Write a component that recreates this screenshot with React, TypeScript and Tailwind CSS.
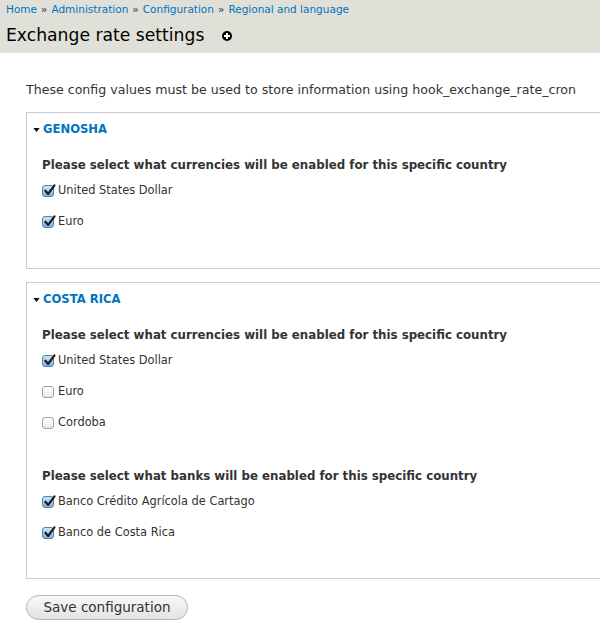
import React from "react";

const font = { fontFamily: '"DejaVu Sans", "Liberation Sans", sans-serif' };

function Box({ checked }: { checked: boolean }) {
  return checked ? (
    <span className="relative inline-block w-[12px] h-[12px] rounded-[3px] border border-[#5a7fa8] bg-gradient-to-b from-[#cfe3f7] to-[#7fb0e0] shrink-0">
      <svg viewBox="0 0 12 12" className="absolute left-[0px] top-[-2px] w-[13px] h-[13px]">
        <path d="M2.2 6.2 L4.8 9.2 L10.6 1.2" fill="none" stroke="#1a1a1a" strokeWidth="2" strokeLinecap="round" strokeLinejoin="round" />
      </svg>
    </span>
  ) : (
    <span className="inline-block w-[12px] h-[12px] rounded-[3px] border border-[#a0a0a0] bg-gradient-to-b from-white to-[#ececec] shrink-0" />
  );
}

function Row({ label, checked }: { label: string; checked: boolean }) {
  return (
    <div className="h-[31px] flex items-center pl-[15px]">
      <Box checked={checked} />
      <span className="ml-[4px] text-[11.4px] text-[#333]">{label}</span>
    </div>
  );
}

function Legend({ text }: { text: string }) {
  return (
    <div className="h-[32px] flex items-center pl-[6px]">
      <svg viewBox="0 0 8 5" className="w-[7px] h-[4px] mr-[3px]">
        <path d="M0 0 L8 0 L4 5 Z" fill="#111" />
      </svg>
      <span className="text-[11.6px] font-bold text-[#0074bd]">{text}</span>
    </div>
  );
}

function Label({ text }: { text: string }) {
  return (
    <div className="h-[18px] flex items-center pl-[15px] text-[11.8px] font-bold text-[#333]">{text}</div>
  );
}

export default function App() {
  return (
    <div className="w-[600px] h-[643px] bg-white overflow-hidden" style={font}>
      <div className="h-[53px] bg-[#e0e0d8] pl-[6px] pt-[1px]">
        <div className="h-[18px] flex items-center text-[10.5px] text-[#0074bd]">
          <span>Home</span>
          <span className="text-[#333] mx-[4px]">»</span>
          <span>Administration</span>
          <span className="text-[#333] mx-[4px]">»</span>
          <span>Configuration</span>
          <span className="text-[#333] mx-[4px]">»</span>
          <span>Regional and language</span>
        </div>
        <div className="h-[34px] flex items-center">
          <span className="text-[17.2px] text-[#000]">Exchange rate settings</span>
          <span className="ml-[18px] relative inline-block w-[10px] h-[10px] rounded-full bg-black">
            <span className="absolute left-[2px] top-[4px] w-[6px] h-[2px] bg-white" />
            <span className="absolute left-[4px] top-[2px] w-[2px] h-[6px] bg-white" />
          </span>
        </div>
      </div>
      <div className="pl-[26px]">
        <div className="h-[18px] mt-[28px] flex items-center text-[12.6px] text-[#333]">
          These config values must be used to store information using hook_exchange_rate_cron
        </div>
        <div className="mt-[13px] mr-[-20px] border border-[#ccc] pt-[1px] pb-[31px]">
          <Legend text="GENOSHA" />
          <div className="mt-[11px]">
            <Label text="Please select what currencies will be enabled for this specific country" />
          </div>
          <Row label="United States Dollar" checked />
          <Row label="Euro" checked />
        </div>
        <div className="mt-[13px] mr-[-20px] border border-[#ccc] pt-[1px] pb-[30px]">
          <Legend text="COSTA RICA" />
          <div className="mt-[11px]">
            <Label text="Please select what currencies will be enabled for this specific country" />
          </div>
          <Row label="United States Dollar" checked />
          <Row label="Euro" checked={false} />
          <Row label="Cordoba" checked={false} />
          <div className="mt-[30px]">
            <Label text="Please select what banks will be enabled for this specific country" />
          </div>
          <Row label="Banco Crédito Agrícola de Cartago" checked />
          <Row label="Banco de Costa Rica" checked />
        </div>
        <button className="mt-[16px] w-[162px] h-[25px] rounded-full border border-[#b5b5b5] bg-gradient-to-b from-[#f8f8f8] to-[#e3e3e3] text-[13.5px] text-[#333] flex items-center justify-center" style={font}>
          Save configuration
        </button>
      </div>
    </div>
  );
}
